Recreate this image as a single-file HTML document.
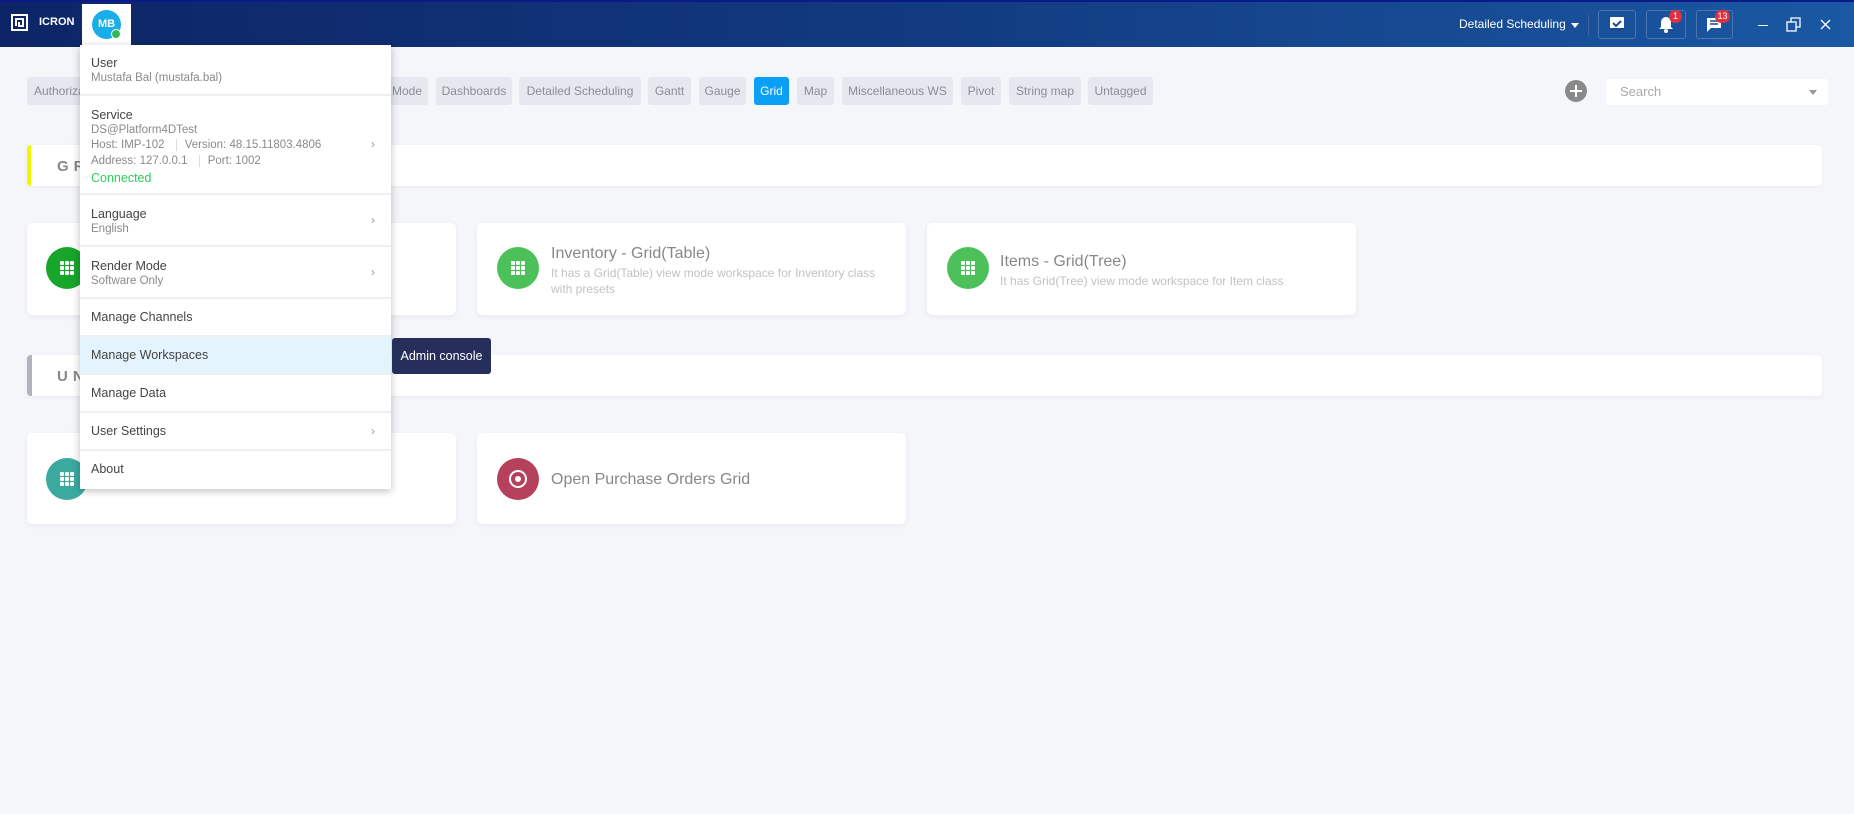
<!DOCTYPE html>
<html><head><meta charset="utf-8"><style>
*{margin:0;padding:0;box-sizing:border-box}
body{width:1854px;height:814px;background:#f5f6fa;font-family:"Liberation Sans",sans-serif;position:relative;overflow:hidden}
.abs{position:absolute}
.top{left:0;top:0;width:1854px;height:47px;background:linear-gradient(90deg,#0d2566 0%,#123a80 50%,#1a58a3 100%);border-top:2px solid #0a1a8a}
.tab{position:absolute;top:77px;height:28px;background:#e6e8ef;border-radius:3px;color:#8a8d96;font-size:12px;line-height:28px;text-align:center;white-space:nowrap;overflow:hidden}
.card{position:absolute;background:#fff;border-radius:6px;box-shadow:0 2px 6px rgba(0,0,0,.05)}
.sec{position:absolute;left:27px;width:1795px;height:41px;background:#fff;border-radius:4px;box-shadow:0 1px 4px rgba(0,0,0,.05)}
.ic{position:absolute;width:42px;height:42px;border-radius:50%}
.gi{position:absolute;left:14px;top:14px;width:14px;height:14px;display:grid;grid-template-columns:repeat(3,4px);gap:1px}
.gi i{background:#fff;display:block;height:4px;border-radius:1px}
.ct{position:absolute;color:#888;font-size:16px}
.cd{position:absolute;color:#c2c2c2;font-size:12px;line-height:16px}
.menu{left:80px;top:45px;width:311px;height:444px;background:#fff;box-shadow:0 2px 8px rgba(0,0,0,.25)}
.row{position:absolute;left:0;width:311px;border-bottom:2px solid #eeeff2}
.t{position:absolute;left:11px;font-size:12.5px;color:#444}
.s{position:absolute;left:11px;font-size:11.5px;color:#8a8a8a;white-space:nowrap}
.ch{position:absolute;right:16px;color:#999;font-size:12px}
.tb{position:absolute;top:10px;height:29px;border:1px solid #4a73b0;border-radius:3px}
</style></head><body>
<div class="abs top"></div>
<svg class="abs" style="left:11px;top:14px" width="17" height="17" viewBox="0 0 17 17"><rect x="1" y="1" width="15" height="15" fill="none" stroke="#fff" stroke-width="2"/><path d="M5 12V5h7v7H8V8" fill="none" stroke="#fff" stroke-width="2"/></svg>
<div class="abs" style="left:39px;top:16px;color:#fff;font-size:11px;font-weight:bold">ICRON</div>
<div class="abs" style="left:82px;top:4px;width:49px;height:41px;background:#fff"></div>
<div class="abs" style="left:92px;top:10px;width:29px;height:29px;border-radius:50%;background:#18aeea;color:#fff;font-size:11px;font-weight:bold;text-align:center;line-height:29px">MB</div>
<div class="abs" style="left:111px;top:29px;width:10px;height:10px;border-radius:50%;background:#2dbb5a;border:1px solid #fff"></div>

<div class="abs" style="left:1459px;top:17px;color:#fff;font-size:12px">Detailed Scheduling</div>
<div class="abs" style="left:1571px;top:23px;border:4px solid transparent;border-top:5px solid #fff"></div>
<div class="abs" style="left:1588px;top:15px;width:1px;height:20px;background:#3d64a5"></div>
<div class="tb" style="left:1598px;width:38px"></div>
<svg class="abs" style="left:1609px;top:16px" width="16" height="16" viewBox="0 0 16 16"><rect x="1" y="1" width="14" height="13" rx="1" fill="#fff"/><path d="M4 7l3 3 5-5" fill="none" stroke="#1a4a92" stroke-width="2"/><rect x="1" y="12" width="14" height="2" fill="#1a4a92"/></svg>
<div class="tb" style="left:1646px;width:40px"></div>
<svg class="abs" style="left:1658px;top:16px" width="16" height="17" viewBox="0 0 16 17"><path d="M8 1C5 1 3 3.5 3 6.5V11L1 13h14l-2-2V6.5C13 3.5 11 1 8 1z" fill="#fff"/><circle cx="8" cy="15" r="2" fill="#fff"/></svg>
<div class="abs" style="left:1669px;top:10px;width:13px;height:13px;border-radius:50%;background:#e0303f;color:#fff;font-size:9px;text-align:center;line-height:13px">1</div>
<div class="tb" style="left:1696px;width:37px"></div>
<svg class="abs" style="left:1706px;top:17px" width="16" height="16" viewBox="0 0 16 16"><path d="M1 1h14v10H5l-4 4z" fill="#fff"/><path d="M4 4h8M4 7h8" stroke="#1a4a92" stroke-width="1.5"/></svg>
<div class="abs" style="left:1715px;top:10px;width:15px;height:13px;border-radius:7px;background:#e0303f;color:#fff;font-size:9px;text-align:center;line-height:13px">13</div>
<div class="abs" style="left:1758px;top:25px;width:10px;height:1px;background:#fff"></div>
<svg class="abs" style="left:1786px;top:17px" width="15" height="15" viewBox="0 0 15 15" fill="none" stroke="#fff" stroke-width="1.3"><rect x="1" y="5" width="9" height="9"/><path d="M5 5V1h9v9h-4"/></svg>
<svg class="abs" style="left:1820px;top:19px" width="11" height="11" viewBox="0 0 11 11" stroke="#fff" stroke-width="1.3"><path d="M1 1l9 9M10 1l-9 9"/></svg>

<div class="tab" style="left:27px;width:70px;text-align:left;padding-left:7px">Authorization</div>
<div class="tab" style="left:360px;width:68px;text-align:right;padding-right:6px">View Mode</div>
<div class="tab" style="left:436px;width:76px">Dashboards</div>
<div class="tab" style="left:519px;width:122px">Detailed Scheduling</div>
<div class="tab" style="left:648px;width:43px">Gantt</div>
<div class="tab" style="left:699px;width:47px">Gauge</div>
<div class="tab" style="left:754px;width:35px;background:#0aa0f5;color:#fff">Grid</div>
<div class="tab" style="left:797px;width:37px">Map</div>
<div class="tab" style="left:842px;width:111px">Miscellaneous WS</div>
<div class="tab" style="left:961px;width:40px">Pivot</div>
<div class="tab" style="left:1009px;width:72px">String map</div>
<div class="tab" style="left:1088px;width:65px">Untagged</div>

<div class="abs" style="left:1565px;top:80px;width:22px;height:22px;border-radius:50%;background:#8a8a8a"></div>
<div class="abs" style="left:1570px;top:90px;width:12px;height:2px;background:#fff"></div>
<div class="abs" style="left:1575px;top:85px;width:2px;height:12px;background:#fff"></div>
<div class="abs" style="left:1606px;top:79px;width:222px;height:26px;background:#fff;border-radius:3px"></div>
<div class="abs" style="left:1620px;top:84px;color:#aaa;font-size:13px">Search</div>
<div class="abs" style="left:1809px;top:90px;border:4px solid transparent;border-top:5px solid #999"></div>

<div class="sec" style="top:145px;border-left:4px solid #f5f500"></div>
<div class="abs" style="left:57px;top:158px;color:#888;font-size:15px;font-weight:bold;letter-spacing:5px">GRID</div>
<div class="card" style="left:27px;top:223px;width:429px;height:92px"></div>
<div class="ic" style="left:46px;top:247px;background:#17a52a"><div class="gi"><i></i><i></i><i></i><i></i><i></i><i></i><i></i><i></i><i></i></div></div>
<div class="card" style="left:477px;top:223px;width:429px;height:92px"></div>
<div class="ic" style="left:497px;top:247px;background:#4cc15a"><div class="gi"><i></i><i></i><i></i><i></i><i></i><i></i><i></i><i></i><i></i></div></div>
<div class="ct" style="left:551px;top:245px">Inventory - Grid(Table)</div>
<div class="cd" style="left:551px;top:265px">It has a Grid(Table) view mode workspace for Inventory class<br>with presets</div>
<div class="card" style="left:927px;top:223px;width:429px;height:92px"></div>
<div class="ic" style="left:947px;top:247px;background:#4cc15a"><div class="gi"><i></i><i></i><i></i><i></i><i></i><i></i><i></i><i></i><i></i></div></div>
<div class="ct" style="left:1000px;top:253px">Items - Grid(Tree)</div>
<div class="cd" style="left:1000px;top:273px">It has Grid(Tree) view mode workspace for Item class</div>

<div class="sec" style="top:355px;border-left:5px solid #b0b3bd"></div>
<div class="abs" style="left:57px;top:368px;color:#888;font-size:15px;font-weight:bold;letter-spacing:5px">UNTAGGED</div>
<div class="card" style="left:27px;top:433px;width:429px;height:91px"></div>
<div class="ic" style="left:46px;top:458px;background:#3aaa9e"><div class="gi"><i></i><i></i><i></i><i></i><i></i><i></i><i></i><i></i><i></i></div></div>
<div class="card" style="left:477px;top:433px;width:429px;height:91px"></div>
<div class="ic" style="left:497px;top:458px;background:#b5415d"></div>
<div class="abs" style="left:509px;top:470px;width:18px;height:18px;border-radius:50%;border:2px solid #fff"></div>
<div class="abs" style="left:515px;top:476px;width:6px;height:6px;border-radius:50%;background:#fff"></div>
<div class="ct" style="left:551px;top:471px">Open Purchase Orders Grid</div>

<div class="abs menu">
<div class="row" style="top:0;height:51px"><div class="t" style="top:11px">User</div><div class="s" style="top:27px">Mustafa Bal (mustafa.bal)</div></div>
<div class="row" style="top:51px;height:99px"><div class="t" style="top:12px">Service</div><div class="s" style="top:28px">DS@Platform4DTest</div>
<div class="s" style="top:43px">Host: IMP-102 <span style="border-left:1px solid #ddd;margin:0 8px"></span> Version: 48.15.11803.4806</div>
<div class="s" style="top:59px">Address: 127.0.0.1 <span style="border-left:1px solid #ddd;margin:0 8px"></span> Port: 1002</div>
<div class="s" style="top:75px;color:#2ecc5a;font-size:12.5px">Connected</div><div class="ch" style="top:41px">›</div></div>
<div class="row" style="top:150px;height:52px"><div class="t" style="top:12px">Language</div><div class="s" style="top:28px">English</div><div class="ch" style="top:18px">›</div></div>
<div class="row" style="top:202px;height:52px"><div class="t" style="top:12px">Render Mode</div><div class="s" style="top:28px">Software Only</div><div class="ch" style="top:18px">›</div></div>
<div class="row" style="top:254px;height:38px"><div class="t" style="top:11px">Manage Channels</div></div>
<div class="row" style="top:292px;height:38px;background:#e4f4fc"><div class="t" style="top:11px">Manage Workspaces</div></div>
<div class="row" style="top:330px;height:38px"><div class="t" style="top:11px">Manage Data</div></div>
<div class="row" style="top:368px;height:38px"><div class="t" style="top:11px">User Settings</div><div class="ch" style="top:11px">›</div></div>
<div class="row" style="top:406px;height:38px;border:0"><div class="t" style="top:11px">About</div></div>
</div>
<div class="abs" style="left:392px;top:338px;width:99px;height:36px;background:#262f5c;border-radius:3px;color:#fff;font-size:12.5px;line-height:36px;text-align:center">Admin console</div>
</body></html>
